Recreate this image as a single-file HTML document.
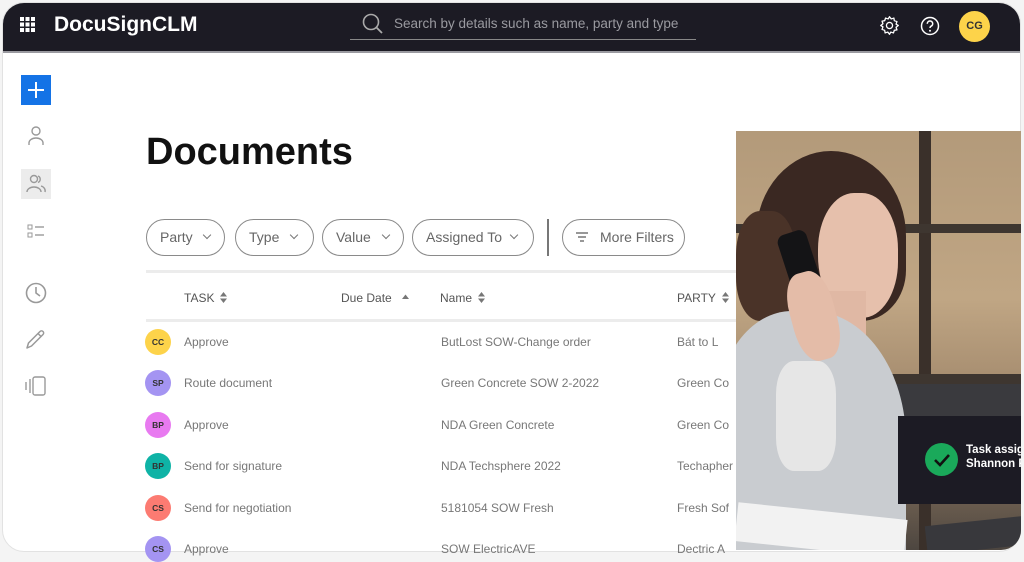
<!DOCTYPE html>
<html><head><meta charset="utf-8"><style>
*{margin:0;padding:0;box-sizing:border-box}
body{width:1024px;height:554px;background:#f4f4f4;font-family:"Liberation Sans",sans-serif;position:relative;overflow:hidden}
.card{position:absolute;left:2px;top:2px;width:1019px;height:550px;background:#fff;border:1px solid #e2e2e2;border-radius:22px;overflow:hidden}
.hdr{position:absolute;left:0;top:0;width:100%;height:50px;background:#1c1b24;border-bottom:2px solid #9a9aa0}
.abs{position:absolute}
.pill{position:absolute;top:219px;height:37px;border:1.5px solid #8a8a8a;border-radius:19px;font-size:14px;color:#666;line-height:34px;padding-left:13px}
.pill .c{position:absolute;top:12px;width:6px;height:6px;border-right:1.5px solid #777;border-bottom:1.5px solid #777;transform:rotate(45deg)}
.th{position:absolute;top:291px;font-size:12px;color:#555}
.th svg{vertical-align:-1px;margin-left:6px}
.row{position:absolute;left:0;width:736px;height:20px;font-size:12px;color:#777}
.av{position:absolute;left:145px;width:26px;height:26px;border-radius:50%;font-size:8.5px;font-weight:bold;color:#333;text-align:center;line-height:26px;top:-6px}
.row span{position:absolute;top:0}
</style></head><body>
<div class="card">
<div class="hdr"></div>
</div>
<svg class="abs" style="left:20px;top:17px" width="15" height="15"><g fill="#fff"><rect x="0" y="0" width="4" height="4"/><rect x="5.5" y="0" width="4" height="4"/><rect x="11" y="0" width="4" height="4"/><rect x="0" y="5.5" width="4" height="4"/><rect x="5.5" y="5.5" width="4" height="4"/><rect x="11" y="5.5" width="4" height="4"/><rect x="0" y="11" width="4" height="4"/><rect x="5.5" y="11" width="4" height="4"/><rect x="11" y="11" width="4" height="4"/></g></svg>
<div class="abs" style="left:54px;top:13px;font-size:21px;color:#fff;font-weight:bold">DocuSignCLM</div>
<svg class="abs" style="left:362px;top:13px" width="22" height="22"><circle cx="9" cy="9" r="7.5" fill="none" stroke="#aaa" stroke-width="1.6"/><line x1="14.5" y1="14.5" x2="20" y2="20" stroke="#aaa" stroke-width="1.8"/></svg>
<div class="abs" style="left:394px;top:16px;font-size:13.5px;color:#9a9aa0">Search by details such as name, party and type</div>
<div class="abs" style="left:350px;top:39px;width:346px;height:1px;background:#888"></div>
<svg class="abs" style="left:879px;top:15px" width="21" height="21" viewBox="0 0 24 24"><path d="M12 2l2 2.5 3-1 .5 3 3 1-1 3L22 12l-2.5 2 1 3-3 .5-1 3-3-1L12 22l-2-2.5-3 1-.5-3-3-1 1-3L2 12l2.5-2-1-3 3-.5 1-3 3 1z" fill="none" stroke="#fff" stroke-width="1.5" stroke-linejoin="round"/><circle cx="12" cy="12" r="3.5" fill="none" stroke="#fff" stroke-width="1.5"/></svg>
<svg class="abs" style="left:920px;top:16px" width="20" height="20"><circle cx="10" cy="10" r="8.5" fill="none" stroke="#fff" stroke-width="1.5"/><path d="M7.3 7.8a2.7 2.7 0 1 1 3.7 2.4c-.7.4-1 .9-1 1.8" fill="none" stroke="#fff" stroke-width="1.5"/><circle cx="10" cy="14.8" r="1" fill="#fff"/></svg>
<div class="abs" style="left:959px;top:11px;width:31px;height:31px;border-radius:50%;background:#fdd34a;font-size:11px;font-weight:bold;color:#333;text-align:center;line-height:31px">CG</div>
<div class="abs" style="left:21px;top:75px;width:30px;height:30px;background:#1473e6"><div class="abs" style="left:7px;top:14px;width:16px;height:2px;background:#fff"></div><div class="abs" style="left:14px;top:7px;width:2px;height:16px;background:#fff"></div></div>
<svg class="abs" style="left:24px;top:125px" width="24" height="22"><circle cx="12" cy="6" r="4" fill="none" stroke="#999" stroke-width="1.4"/><path d="M5 20v-2a7 5 0 0 1 14 0v2" fill="none" stroke="#999" stroke-width="1.4"/></svg>
<div class="abs" style="left:21px;top:169px;width:30px;height:30px;background:#ececec"></div>
<svg class="abs" style="left:24px;top:172px" width="24" height="24"><circle cx="10" cy="7" r="3.5" fill="none" stroke="#999" stroke-width="1.4"/><path d="M3 20a7 5 0 0 1 14 0M14 4a3.5 3.5 0 0 1 0 6.5M17 14a6 5 0 0 1 4 6" fill="none" stroke="#999" stroke-width="1.4"/></svg>
<svg class="abs" style="left:27px;top:224px" width="20" height="16"><rect x="1" y="1" width="4" height="4" fill="none" stroke="#999"/><rect x="1" y="9" width="4" height="4" fill="none" stroke="#999"/><line x1="8" y1="3" x2="17" y2="3" stroke="#999" stroke-width="1.4"/><line x1="8" y1="11" x2="17" y2="11" stroke="#999" stroke-width="1.4"/></svg>
<svg class="abs" style="left:24px;top:281px" width="24" height="24"><circle cx="12" cy="12" r="9.5" fill="none" stroke="#999" stroke-width="1.6"/><path d="M12 6v6l4 3" fill="none" stroke="#999" stroke-width="1.6"/></svg>
<svg class="abs" style="left:24px;top:327px" width="24" height="24"><path d="M3 21l1.5-5L16 4.5a2.1 2.1 0 0 1 3 3L7.5 19z M14 6.5l3 3" fill="none" stroke="#999" stroke-width="1.5" stroke-linejoin="round"/></svg>
<svg class="abs" style="left:24px;top:375px" width="24" height="22"><line x1="2" y1="7" x2="2" y2="15" stroke="#999" stroke-width="1.4"/><line x1="6" y1="4" x2="6" y2="18" stroke="#999" stroke-width="1.4"/><rect x="9" y="2" width="12" height="18" rx="2" fill="none" stroke="#999" stroke-width="1.4"/></svg>
<div class="abs" style="left:146px;top:131px;font-size:38px;font-weight:bold;color:#111">Documents</div>
<div class="pill" style="left:146px;width:79px">Party<div class="c" style="left:57px"></div></div>
<div class="pill" style="left:235px;width:79px">Type<div class="c" style="left:55px"></div></div>
<div class="pill" style="left:322px;width:82px">Value<div class="c" style="left:60px"></div></div>
<div class="pill" style="left:412px;width:122px">Assigned To<div class="c" style="left:98px"></div></div>
<div class="abs" style="left:547px;top:219px;width:2px;height:37px;background:#777"></div>
<div class="pill" style="left:562px;width:123px;padding-left:37px">More Filters<svg class="abs" style="left:13px;top:12px" width="12" height="10"><path d="M0 1h12M2 5h8M4 9h4" stroke="#777" stroke-width="1.5"/></svg></div>
<div class="abs" style="left:146px;top:270px;width:590px;height:3px;background:#ececec"></div>
<div class="th" style="left:184px">TASK<svg width="7" height="11"><path d="M0 4.5L3.5 0 7 4.5zM0 6.5L3.5 11 7 6.5z" fill="#777"/></svg></div>
<div class="th" style="left:341px">Due Date<svg width="7" height="11" style="margin-left:10px"><path d="M0 7L3.5 2.5 7 7z" fill="#777"/></svg></div>
<div class="th" style="left:440px">Name<svg width="7" height="11"><path d="M0 4.5L3.5 0 7 4.5zM0 6.5L3.5 11 7 6.5z" fill="#777"/></svg></div>
<div class="th" style="left:677px">PARTY<svg width="7" height="11"><path d="M0 4.5L3.5 0 7 4.5zM0 6.5L3.5 11 7 6.5z" fill="#777"/></svg></div>
<div class="abs" style="left:146px;top:319px;width:590px;height:3px;background:#ececec"></div>
<div class="row" style="top:335px"><div class="av" style="background:#fdd34a">CC</div><span style="left:184px">Approve</span><span style="left:441px">ButLost SOW-Change order</span><span style="left:677px">Bát to L</span></div>
<div class="row" style="top:376px"><div class="av" style="background:#a494f2">SP</div><span style="left:184px">Route document</span><span style="left:441px">Green Concrete SOW 2-2022</span><span style="left:677px">Green Co</span></div>
<div class="row" style="top:418px"><div class="av" style="background:#e87af0">BP</div><span style="left:184px">Approve</span><span style="left:441px">NDA Green Concrete</span><span style="left:677px">Green Co</span></div>
<div class="row" style="top:459px"><div class="av" style="background:#0fb3a6">BP</div><span style="left:184px">Send for signature</span><span style="left:441px">NDA Techsphere 2022</span><span style="left:677px">Techapher</span></div>
<div class="row" style="top:501px"><div class="av" style="background:#fc7b72">CS</div><span style="left:184px">Send for negotiation</span><span style="left:441px">5181054 SOW Fresh</span><span style="left:677px">Fresh Sof</span></div>
<div class="row" style="top:542px"><div class="av" style="background:#a494f2">CS</div><span style="left:184px">Approve</span><span style="left:441px">SOW ElectricAVE</span><span style="left:677px">Dectric A</span></div>
<div class="abs" style="left:736px;top:131px;width:285px;height:419px;overflow:hidden;border-bottom-right-radius:20px;background:linear-gradient(180deg,#b39a7a 0%,#c0a684 40%,#9a8166 70%,#4d4640 100%)">
 <div class="abs" style="left:183px;top:0;width:12px;height:419px;background:#3a302a"></div>
 <div class="abs" style="left:0;top:93px;width:285px;height:9px;background:#3e3630"></div>
 <div class="abs" style="left:150px;top:243px;width:135px;height:10px;background:#3e3630"></div>
 <div class="abs" style="left:150px;top:253px;width:135px;height:70px;background:#3a3a3e"></div>
 <div class="abs" style="left:20px;top:20px;width:150px;height:170px;border-radius:50% 50% 30% 40%;background:#3a2822"></div>
 <div class="abs" style="left:0px;top:80px;width:60px;height:110px;border-radius:40%;background:#4a3328"></div>
 <div class="abs" style="left:82px;top:62px;width:80px;height:125px;border-radius:45% 45% 45% 50%;background:#e6c0ac"></div>
 <div class="abs" style="left:80px;top:160px;width:50px;height:60px;background:#e0b8a4"></div>
 <div class="abs" style="left:50px;top:100px;width:30px;height:72px;border-radius:8px;background:#141416;transform:rotate(-18deg)"></div>
 <div class="abs" style="left:-20px;top:180px;width:190px;height:260px;border-radius:40% 50% 0 0;background:#c9ccd0"></div>
 <div class="abs" style="left:40px;top:230px;width:60px;height:110px;background:#e6e6e6;border-radius:30%"></div>
 <div class="abs" style="left:55px;top:140px;width:45px;height:90px;border-radius:40%;background:#e4bca8;transform:rotate(-15deg)"></div>
 <div class="abs" style="left:0;top:380px;width:170px;height:39px;background:#f2f2f2;transform:rotate(6deg)"></div>
 <div class="abs" style="left:190px;top:390px;width:100px;height:29px;background:#38383c;transform:rotate(-6deg)"></div>
</div>
<div class="abs" style="left:898px;top:416px;width:123px;height:88px;background:#1c1b24"></div>
<div class="abs" style="left:925px;top:443px;width:33px;height:33px;border-radius:50%;background:#1aa95a"></div>
<svg class="abs" style="left:933px;top:452px" width="18" height="16"><path d="M2 8l5 5 9-10" fill="none" stroke="#111" stroke-width="2.6"/></svg>
<div class="abs" style="left:966px;top:443px;font-size:11.5px;font-weight:bold;color:#fff;line-height:14px;width:55px;overflow:hidden;white-space:nowrap">Task assig<br>Shannon F</div>
</body></html>
